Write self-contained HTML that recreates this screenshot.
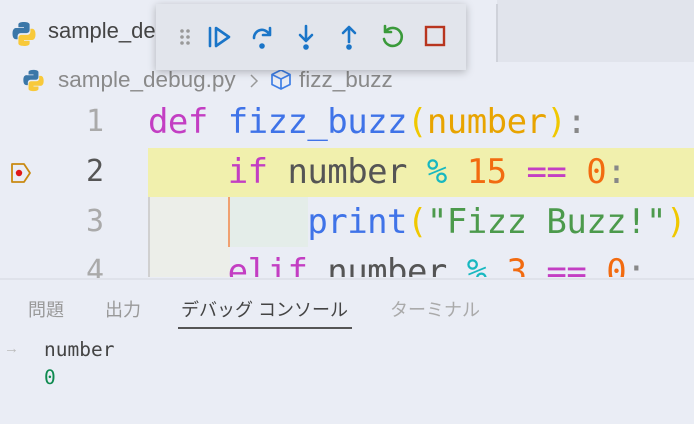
<!DOCTYPE html>
<html><head><meta charset="utf-8"><style>
*{margin:0;padding:0;box-sizing:border-box}
body{width:694px;height:424px;overflow:hidden;background:#eaedf5;position:relative;font-family:"Liberation Sans","Noto Sans CJK JP",sans-serif}
.abs{position:absolute}
.mono{font-family:"DejaVu Sans Mono","Liberation Mono",monospace}
.code{position:absolute;left:148px;font-size:34px;line-height:50px;white-space:pre;font-family:"DejaVu Sans Mono","Liberation Mono",monospace;letter-spacing:-0.55px}
.ln{position:absolute;width:104px;text-align:right;font-size:30px;line-height:50px;font-family:"DejaVu Sans Mono",monospace;color:#aaa;left:0}
.k{color:#c33ec3}.f{color:#3f73e8}.p{color:#e8a400}.y{color:#f0c800}.g{color:#888}.t{color:#555}.c{color:#18b8c0}.o{color:#f26b10}.s{color:#4c9a4c}
</style></head><body>
<div class="abs" style="left:0;top:0;width:694px;height:62px;background:#e1e4ec"></div>
<div class="abs" style="left:0;top:0;width:497px;height:62px;background:#eaedf5"></div>
<div class="abs" style="left:496px;top:4px;width:2px;height:58px;background:#cfd2da"></div>
<svg class="abs" style="left:11px;top:21px" width="26" height="26" viewBox="0 0 26 26"><path d="M12.8 1C7 1 7.4 3.5 7.4 3.5V6.2h5.6V7H5.2S1.5 6.6 1.5 12.5 4.7 18.2 4.7 18.2H6.6v-2.8s-.1-3.3 3.3-3.3h5.5s3.2.1 3.2-3.1V3.7S19.1 1 12.8 1z" fill="#3b77a8"/><path d="M13.2 25c5.8 0 5.4-2.5 5.4-2.5v-2.7H13V19h7.8s3.7.4 3.7-5.5-3.2-5.7-3.2-5.7h-1.9v2.8s.1 3.3-3.3 3.3h-5.5s-3.2-.1-3.2 3.1v5.3S6.9 25 13.2 25z" fill="#f8c93a"/></svg>
<div class="abs" style="left:48px;top:18px;font-size:22px;color:#444">sample_de</div>
<svg class="abs" style="left:22px;top:69px" width="23" height="23" viewBox="0 0 26 26"><path d="M12.8 1C7 1 7.4 3.5 7.4 3.5V6.2h5.6V7H5.2S1.5 6.6 1.5 12.5 4.7 18.2 4.7 18.2H6.6v-2.8s-.1-3.3 3.3-3.3h5.5s3.2.1 3.2-3.1V3.7S19.1 1 12.8 1z" fill="#3b77a8"/><path d="M13.2 25c5.8 0 5.4-2.5 5.4-2.5v-2.7H13V19h7.8s3.7.4 3.7-5.5-3.2-5.7-3.2-5.7h-1.9v2.8s.1 3.3-3.3 3.3h-5.5s-3.2-.1-3.2 3.1v5.3S6.9 25 13.2 25z" fill="#f8c93a"/></svg>
<div class="abs" style="left:58px;top:67px;font-size:22.5px;color:#8a8a8a">sample_debug.py</div>
<svg class="abs" style="left:248px;top:72px" width="12" height="18" viewBox="0 0 12 18"><path d="M3 3l6 6-6 6" fill="none" stroke="#999" stroke-width="1.5"/></svg>
<svg class="abs" style="left:270px;top:68px" width="22" height="24" viewBox="0 0 22 24"><path d="M11 2l9 4.5v10L11 21l-9-4.5v-10zM2 6.5l9 4.5 9-4.5M11 11v10" fill="none" stroke="#3f7fe6" stroke-width="1.7" stroke-linejoin="round"/></svg>
<div class="abs" style="left:299px;top:67px;font-size:22.5px;color:#8a8a8a">fizz_buzz</div>
<div class="abs" style="left:148px;top:148px;width:546px;height:49px;background:#f1f0ad"></div>
<div class="abs" style="left:148px;top:197px;width:82px;height:80px;background:#eceee9"></div>
<div class="abs" style="left:148px;top:197px;width:2px;height:80px;background:#d0d0d0"></div>
<div class="abs" style="left:230px;top:197px;width:78px;height:50px;background:#e4ede9"></div>
<div class="abs" style="left:228px;top:197px;width:2px;height:50px;background:#f0a070"></div>
<div class="ln" style="top:97px">1</div>
<div class="ln" style="top:147px;color:#555">2</div>
<div class="ln" style="top:197px">3</div>
<div class="ln" style="top:247px">4</div>
<svg class="abs" style="left:10px;top:161px" width="22" height="24" viewBox="0 0 22 24"><path d="M2 3h12l6 9-6 9H2z" fill="none" stroke="#c98a12" stroke-width="1.8" stroke-linejoin="round"/><circle cx="9" cy="12" r="3.2" fill="#e01818"/></svg>
<div class="code" style="top:97px"><span class="k">def</span> <span class="f">fizz_buzz</span><span class="y">(</span><span class="p">number</span><span class="y">)</span><span class="g">:</span></div>
<div class="code" style="top:147px">    <span class="k">if</span> <span class="t">number</span> <span class="c">%</span> <span class="o">15</span> <span class="k">==</span> <span class="o">0</span><span class="g">:</span></div>
<div class="code" style="top:197px">        <span class="f">print</span><span class="y">(</span><span class="s">"Fizz Buzz!"</span><span class="y">)</span></div>
<div class="abs" style="left:0;top:247px;width:694px;height:30px;overflow:hidden"><div class="code" style="top:0"><span class="k">    elif</span> <span class="t">number</span> <span class="c">%</span> <span class="o">3</span> <span class="k">==</span> <span class="o">0</span><span class="g">:</span></div></div>
<div class="abs" style="left:156px;top:4px;width:310px;height:66px;background:#e2e5ec;box-shadow:0 2px 8px rgba(0,0,0,.25)"></div>
<svg class="abs" style="left:156px;top:4px" width="310" height="66" viewBox="0 0 310 66">
<g fill="#999"><circle cx="26" cy="27" r="1.8"/><circle cx="32" cy="27" r="1.8"/><circle cx="26" cy="33" r="1.8"/><circle cx="32" cy="33" r="1.8"/><circle cx="26" cy="39" r="1.8"/><circle cx="32" cy="39" r="1.8"/></g>
<g fill="none" stroke="#1a75c8" stroke-width="2.6" stroke-linecap="round" stroke-linejoin="round">
<path d="M54 24v18M60 24l13 9-13 9z"/>
<path d="M98 34a8 8 0 0 1 15-4M114 24v7h-7"/>
<path d="M150 22v14M144 31l6 6 6-6"/>
<path d="M193 38v-14M187 29l6-6 6 6"/>
</g>
<g fill="#1a75c8"><circle cx="106" cy="42" r="2.8"/><circle cx="150" cy="43" r="2.8"/><circle cx="193" cy="43" r="2.8"/></g>
<path d="M230 27a9 9 0 1 1-2 8M229 22v6h6" fill="none" stroke="#3a9a3a" stroke-width="2.6" stroke-linecap="round" stroke-linejoin="round"/>
<rect x="270" y="23" width="18" height="18" fill="none" stroke="#b8351f" stroke-width="2.4"/>
</svg>
<div class="abs" style="left:0;top:278px;width:694px;height:146px;background:#eaedf5;border-top:2px solid #dfe2ea"></div>
<div class="abs" style="left:28px;top:296px;font-size:18px;color:#999">問題</div>
<div class="abs" style="left:105px;top:296px;font-size:18px;color:#999">出力</div>
<div class="abs" style="left:181px;top:296px;font-size:18px;color:#444">デバッグ コンソール</div>
<div class="abs" style="left:178px;top:327px;width:174px;height:2px;background:#555"></div>
<div class="abs" style="left:390px;top:296px;font-size:18px;color:#aaa">ターミナル</div>
<div class="abs" style="left:4px;top:340px;font-size:15px;color:#bbb">→</div>
<div class="abs mono" style="left:44px;top:338px;font-size:19.5px;color:#444">number</div>
<div class="abs mono" style="left:44px;top:366px;font-size:19.5px;color:#0e8a4f">0</div>
</body></html>
